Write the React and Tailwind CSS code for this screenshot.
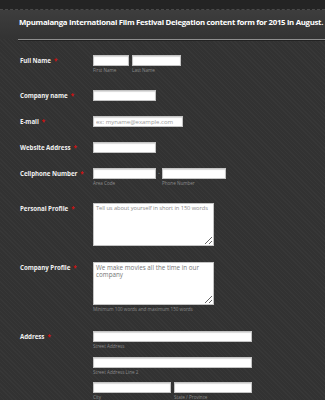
import React from "react";

const Req = () => <span className="ml-[3px] text-[#d41010]">*</span>;

const Label = ({ children }) => (
  <div className="w-[73px] shrink-0 text-[6.2px] font-bold leading-[11px] tracking-[-0.05px] text-[#f0f0f0]">
    {children}
    <Req />
  </div>
);

const Sub = ({ children, className = "" }) => (
  <div className={"h-[8px] whitespace-nowrap text-[4.6px] leading-[8px] text-[#8c8c8c] " + className}>{children}</div>
);

const inputCls =
  "block h-[11px] border border-[#c4c4c4] bg-white px-[2px] text-[6px] text-[#555] outline-none shadow-[inset_0_1px_1px_rgba(0,0,0,0.15)] placeholder:text-[#9a9a9a]";

const areaCls =
  "block h-[43px] w-[121px] resize border border-[#c4c4c4] bg-white px-[2px] py-[1px] leading-[7px] text-[#777] outline-none placeholder:text-[#8a8a8a]";

export default function App() {
  return (
    <div
      className="min-h-screen w-full overflow-hidden bg-[#323232] bg-[repeating-linear-gradient(45deg,rgba(255,255,255,0.025)_0px,rgba(255,255,255,0.025)_1px,transparent_1px,transparent_3px)]"
      style={{ fontFamily: '"Open Sans", "Liberation Sans", sans-serif' }}
    >
      {/* top band */}
      <div className="h-[10px] border-b border-dashed border-[#4a4a4a] bg-[#242424]" />
      {/* header */}
      <div className="h-[29px] bg-gradient-to-b from-[#3d3d3d] to-[#333333] pl-[19px] pt-[6px]">
        <div className="whitespace-nowrap text-[7.8px] font-bold leading-[12px] tracking-[-0.29px] text-white">
          Mpumalanga International Film Festival Delegation content form for 2015 in August.
        </div>
      </div>
      <div className="ml-[18px] h-[2px] border-t border-[#8e8e8e] bg-[#222]" />

      <div className="flex flex-col pl-[20px]">
        {/* Full name */}
        <div className="mt-[14px] flex">
          <Label>Full Name</Label>
          <div className="flex gap-[3px]">
            <div>
              <input className={inputCls + " w-[36px]"} />
              <Sub>First Name</Sub>
            </div>
            <div>
              <input className={inputCls + " w-[49px]"} />
              <Sub>Last Name</Sub>
            </div>
          </div>
        </div>

        {/* Company */}
        <div className="mt-[16px] flex">
          <Label>Company name</Label>
          <input className={inputCls + " w-[63px]"} />
        </div>

        {/* Email */}
        <div className="mt-[15px] flex">
          <Label>E-mail</Label>
          <input className={inputCls + " w-[90px]"} placeholder="ex: myname@example.com" />
        </div>

        {/* Website */}
        <div className="mt-[15px] flex">
          <Label>Website Address</Label>
          <input className={inputCls + " w-[63px]"} />
        </div>

        {/* Cellphone */}
        <div className="mt-[15px] flex">
          <Label>Cellphone Number</Label>
          <div className="flex">
            <div>
              <input className={inputCls + " w-[63px]"} />
              <Sub>Area Code</Sub>
            </div>
            <div className="w-[6px] text-center text-[6px] leading-[11px] text-[#aaa]">-</div>
            <div>
              <input className={inputCls + " w-[64px]"} />
              <Sub>Phone Number</Sub>
            </div>
          </div>
        </div>

        {/* Personal profile */}
        <div className="mt-[16px] flex">
          <Label>Personal Profile</Label>
          <textarea
            className={areaCls + " text-[5.7px] tracking-[-0.05px]"}
            placeholder="Tell us about yourself in short in 150 words"
          />
        </div>

        {/* Company profile */}
        <div className="mt-[16px] flex">
          <Label>Company Profile</Label>
          <div>
            <textarea
              className={areaCls + " text-[6.3px]"}
              defaultValue="We make movies all the time in our company"
            />
            <Sub>Minimum 100 words and maximum 150 words</Sub>
          </div>
        </div>

        {/* Address */}
        <div className="mt-[18px] flex">
          <Label>Address</Label>
          <div className="flex flex-col">
            <input className={inputCls + " w-[159px]"} />
            <Sub>Street Address</Sub>
            <input className={inputCls + " mt-[7px] w-[159px]"} />
            <Sub>Street Address Line 2</Sub>
            <div className="mt-[6px] flex gap-[3px]">
              <div>
                <input className={inputCls + " w-[78px]"} />
                <Sub>City</Sub>
              </div>
              <div>
                <input className={inputCls + " w-[78px]"} />
                <Sub>State / Province</Sub>
              </div>
            </div>
          </div>
        </div>
      </div>
    </div>
  );
}
